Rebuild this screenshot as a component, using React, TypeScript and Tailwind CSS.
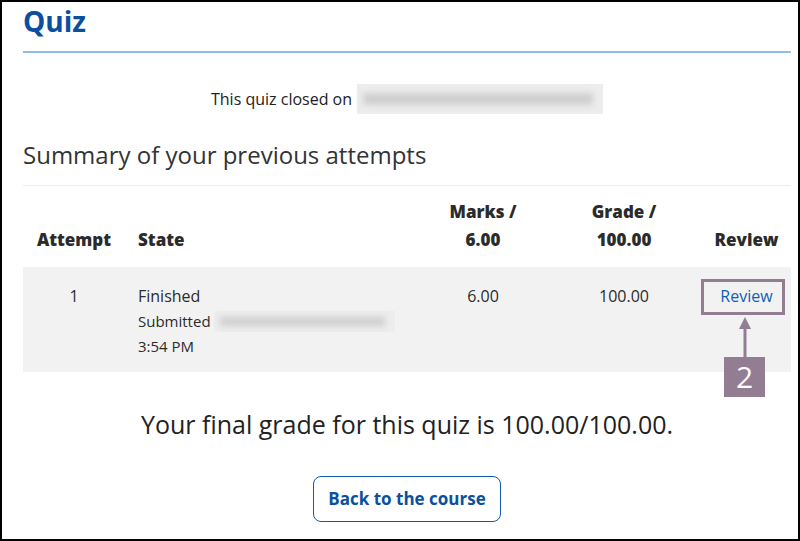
import React from "react";

const font = { fontFamily: '"Open Sans", "Noto Sans", Arial, sans-serif' };

// blurred placeholder for redacted dates
function Redacted({ className }: { className: string }) {
  return (
    <span className={`inline-block relative bg-[#ededed] align-middle ${className}`}>
      <span className="absolute left-[6px] right-[10px] top-[30%] bottom-[30%] bg-[#cfcfcf] blur-[3px]" />
    </span>
  );
}

export default function App() {
  return (
    <div
      className="w-[800px] h-[541px] border-2 border-black bg-white text-[#333] overflow-hidden"
      style={font}
    >
      <div className="pl-[21px] pr-[7px]">
        <h1 className="h-[51px] border-b-2 border-[#91bde8] text-[28px] leading-[38px] font-bold text-[#0b4f9e]">
          Quiz
        </h1>

        <div className="mt-[31px] flex justify-center items-center text-[16px] leading-[24px] text-[#222]">
          <span className="mr-[5px]">This quiz closed on</span>
          <Redacted className="w-[246px] h-[30px]" />
        </div>

        <h2 className="mt-[25px] text-[24px] leading-[32px] text-[#333] pb-[14px] border-b border-[#eeeeee]">
          Summary of your previous attempts
        </h2>

        <div className="relative">
          <div className="grid grid-cols-[102px_295px_126px_156px_89px] items-end pt-[12px] pb-[13px] text-[17px] leading-[28px] font-extrabold text-[#2b2b2b]">
            <div className="text-center">Attempt</div>
            <div className="pl-[13px]">State</div>
            <div className="text-center">
              Marks /<br />6.00
            </div>
            <div className="text-center">
              Grade /<br />100.00
            </div>
            <div className="text-center">Review</div>
          </div>

          <div className="grid grid-cols-[102px_295px_126px_156px_89px] items-start bg-[#f2f2f2] h-[105px] pt-[16px] text-[16px] leading-[26px] text-[#2b2b2b]">
            <div className="text-center">1</div>
            <div className="pl-[13px]">
              <div>Finished</div>
              <div className="text-[15px] leading-[25px] flex items-center">
                <span className="mr-[3px]">Submitted</span>
                <Redacted className="w-[181px] h-[21px]" />
              </div>
              <div className="text-[15px] leading-[25px]">3:54 PM</div>
            </div>
            <div className="text-center">6.00</div>
            <div className="text-center">100.00</div>
            <div className="text-center text-[#0f5fb5]">Review</div>
          </div>

          {/* annotation callout */}
          <div className="absolute left-[678px] top-[93px] w-[84px] h-[36px] border-[3px] border-[#927d92]" />
          <svg
            className="absolute left-[714px] top-[131px]"
            width="16"
            height="41"
            viewBox="0 0 16 41"
          >
            <polygon points="8,0 2,12 14,12" fill="#927d92" />
            <rect x="6.5" y="10" width="3" height="31" fill="#927d92" />
          </svg>
          <div className="absolute left-[701px] top-[171px] w-[41px] h-[40px] bg-[#927d92] text-white text-[30px] leading-[40px] text-center">
            2
          </div>
        </div>

        <div className="mt-[36px] text-center text-[25px] leading-[32px] text-[#222]">
          Your final grade for this quiz is 100.00/100.00.
        </div>

        <div className="mt-[36px] flex justify-center">
          <button className="w-[188px] h-[46px] rounded-lg border border-[#0f5bb0] bg-white text-[17px] font-bold text-[#0b4f9e]">
            Back to the course
          </button>
        </div>
      </div>
    </div>
  );
}
